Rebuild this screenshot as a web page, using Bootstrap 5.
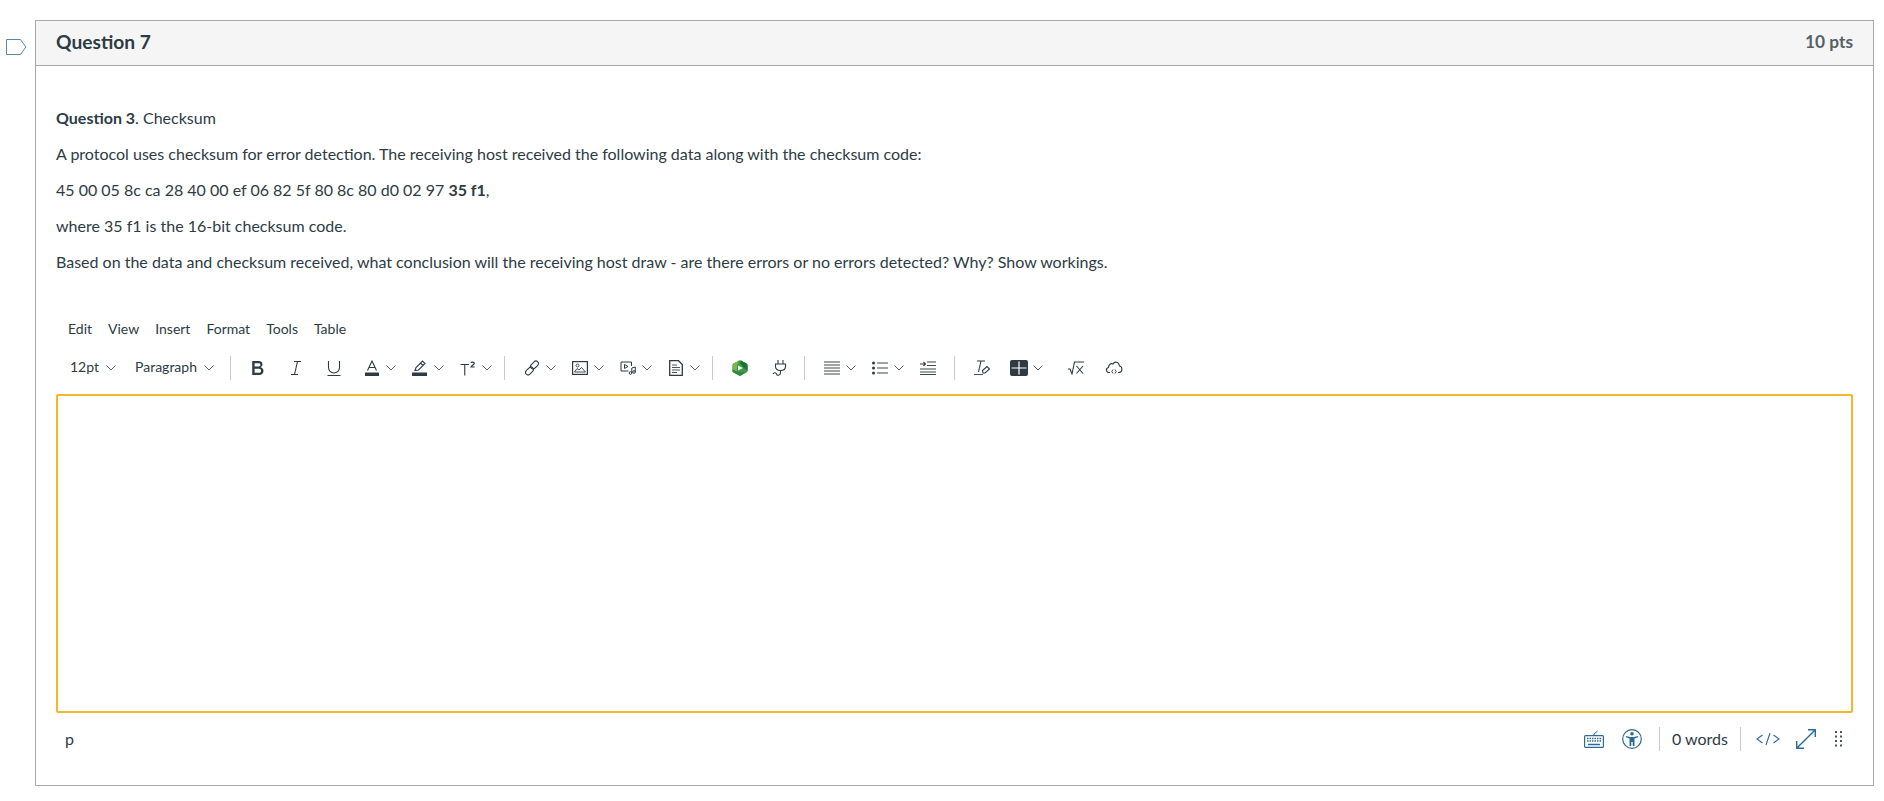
<!doctype html>
<html lang="en">
<head>
<meta charset="utf-8">
<title>Question 7</title>
<link href="https://cdn.jsdelivr.net/npm/bootstrap@5.3.0/dist/css/bootstrap.min.css" rel="stylesheet">
<style>
html,body{height:100%;background:#fff}
body{font-family:Lato,"Liberation Sans",sans-serif;color:#2d3b45;font-size:16px;overflow:hidden}
.page-wrap{padding:20px 10px 0 0}
.flag-col{width:35px;flex:none;padding:14px 0 0 6px}
.q-card{flex:1;height:766px;border:1px solid #a9a9a9;border-radius:0;--bs-card-inner-border-radius:0}
.q-head{height:45px;background:#f5f5f5;border-bottom:1px solid #a9a9a9;border-radius:0;padding:0 20px 2px;color:#2d3b45}
.q-title{font-size:19.2px;font-weight:700}
.q-pts{font-size:17.3px;font-weight:700;color:#565f66}
.q-body{padding:0 20px}
.q-text{padding-top:40px;height:246px}
.q-text p{line-height:24px;margin:0 0 12px;font-size:16px}
.menu-row{height:24px;margin-top:5px;padding-left:12px;gap:16px;font-size:14px;color:#2d3b45;line-height:24px}
.tool-row{height:40px;margin-top:7px;font-size:14px;color:#2d3b45}
.tool-row svg{display:block}
.drop{display:flex;align-items:center;justify-content:center;width:10px;flex:none}
.txt-tool{padding-left:14px;padding-bottom:3px;display:flex;align-items:center}
.vsep{width:1px;height:24px;background:#c7cdd1;flex:none}
.ic38{width:38px;flex:none;display:flex;justify-content:center}
.ic40{width:40px;flex:none;display:flex;justify-content:center}
.ic28{width:28px;flex:none;display:flex;justify-content:center}
.splt{width:48px;flex:none;display:flex;align-items:center}
.splt-ic{width:28px;flex:none;display:flex;justify-content:center}
.o2{margin-left:2px}.o4{margin-left:4px}.o5{margin-left:5px}.o7{margin-left:7px}.o8{margin-left:8px}.o9{margin-left:9px}.o12{margin-left:12px}.o13{margin-left:13px}.o16{margin-left:16px}
.para-tool{padding-left:19px}
.edit-box{height:319px;border:2px solid #f2b82c;border-radius:2px;margin-top:6px;background:#fff}
.status-row{height:52px;font-size:16px;padding:0 0 0 9px}
.stat-p{font-size:16px;color:#2d3b45}
.stat-sep{width:1px;height:24px;background:#c7cdd1;flex:none}
</style>
</head>
<body>
<div class="page-wrap d-flex">
  <div class="flag-col">
    <svg width="21" height="17" viewBox="0 0 21 17"><path d="M.5.5H14.500L19.800 8 14.500 15.500H.5Z" fill="none" stroke="#5a87a5" stroke-width="1"/></svg>
  </div>
  <div class="card q-card">
    <div class="card-header q-head d-flex align-items-center justify-content-between">
      <div class="q-title">Question 7</div>
      <div class="q-pts">10 pts</div>
    </div>
    <div class="card-body q-body">
      <div class="q-text">
        <p><strong>Question 3</strong>. Checksum</p>
        <p>A protocol uses checksum for error detection. The receiving host received the following data along with the checksum code:</p>
        <p>45 00 05 8c ca 28 40 00 ef 06 82 5f 80 8c 80 d0 02 97 <strong>35 f1</strong>,</p>
        <p>where 35 f1 is the 16-bit checksum code.</p>
        <p>Based on the data and checksum received, what conclusion will the receiving host draw - are there errors or no errors detected? Why? Show workings.</p>
      </div>
      <div class="menu-row d-flex">
        <span>Edit</span><span>View</span><span>Insert</span><span>Format</span><span>Tools</span><span>Table</span>
      </div>
      <div class="tool-row d-flex align-items-center">
        <div class="txt-tool"><span>12pt</span></div>
        <div class="drop o7"><svg width="10" height="6" viewBox="0 0 10 6"><path d="M.5.5 5 5 9.500.5" fill="none" stroke="#2d3b45" stroke-width=".8"/></svg></div>
        <div class="txt-tool para-tool"><span>Paragraph</span></div>
        <div class="drop o7"><svg width="10" height="6" viewBox="0 0 10 6"><path d="M.5.5 5 5 9.500.5" fill="none" stroke="#2d3b45" stroke-width=".8"/></svg></div>
        <div class="vsep o16"></div>

        <div class="ic38 o8"><svg width="16" height="16" viewBox="0 0 16 16"><path d="M2.200 1H9c2.200 0 3.500 1.400 3.500 3.300 0 1.400-.8 2.500-2 2.900 1.700.3 3 1.600 3 3.500 0 2.500-1.700 4.300-4.200 4.300H2.200ZM4.600 3.200V6.500H8.700c1.100 0 1.700-.7 1.700-1.650s-.6-1.650-1.700-1.650ZM4.600 8.700V12.800H9c1.300 0 2.100-.8 2.100-2.050S10.300 8.700 9 8.700Z" fill="#2d3b45" fill-rule="evenodd"/></svg></div>
        <div class="ic38"><svg width="12" height="16" viewBox="0 0 12 16"><path d="M4 1.500H11M1 14.500H8M7.500 1.500 4.500 14.500" fill="none" stroke="#2d3b45" stroke-width="1.100"/></svg></div>
        <div class="ic38"><svg width="14" height="16" viewBox="0 0 14 16"><path d="M1.500 1V7.500a5.500 5.500 0 0 0 11 0V1M.5 15.500H13.500" fill="none" stroke="#2d3b45" stroke-width="1.100"/></svg></div>

        <div class="splt o5"><div class="splt-ic"><svg width="14" height="16" viewBox="0 0 14 16"><path d="M2.500 10.500 7 1 11.500 10.500M4 7.500H10" fill="none" stroke="#2d3b45" stroke-width="1.100"/><rect y="12.500" width="14" height="3.500" fill="#2d3b45"/></svg></div><div class="drop"><svg width="10" height="6" viewBox="0 0 10 6"><path d="M.5.5 5 5 9.500.5" fill="none" stroke="#2d3b45" stroke-width=".8"/></svg></div></div>
        <div class="splt"><div class="splt-ic"><svg width="15" height="16" viewBox="0 0 15 16"><path d="M3 10.500 4 7.500 10.500 1 13 3.500 6.500 10 3 10.500ZM8.500 3 11 5.500" fill="none" stroke="#2d3b45" stroke-width="1.100"/><rect y="12.500" width="15" height="3.500" fill="#2d3b45"/></svg></div><div class="drop"><svg width="10" height="6" viewBox="0 0 10 6"><path d="M.5.5 5 5 9.500.5" fill="none" stroke="#2d3b45" stroke-width=".8"/></svg></div></div>
        <div class="splt"><div class="splt-ic"><svg width="16" height="16" viewBox="0 0 16 16"><path d="M.5 4.500H9M4.750 4.500V15.500" fill="none" stroke="#2d3b45" stroke-width="1.100"/><path d="M11 3c.2-1.200 3.300-1.400 3.300.3 0 1.300-2.500 1.800-3.300 3.700h3.600" fill="none" stroke="#2d3b45" stroke-width="1.200"/></svg></div><div class="drop"><svg width="10" height="6" viewBox="0 0 10 6"><path d="M.5.5 5 5 9.500.5" fill="none" stroke="#2d3b45" stroke-width=".8"/></svg></div></div>

        <div class="vsep o2"></div>

        <div class="splt o13"><div class="splt-ic"><svg width="16" height="16" viewBox="0 0 16 16"><g fill="none" stroke="#2d3b45" stroke-width="1.100"><rect x="1" y="8.500" width="9" height="5" rx="2.500" transform="rotate(-45 5.500 11)"/><rect x="6" y="2.500" width="9" height="5" rx="2.500" transform="rotate(-45 10.500 5)"/></g></svg></div><div class="drop"><svg width="10" height="6" viewBox="0 0 10 6"><path d="M.5.5 5 5 9.500.5" fill="none" stroke="#2d3b45" stroke-width=".8"/></svg></div></div>
        <div class="splt"><div class="splt-ic"><svg width="16" height="14" viewBox="0 0 16 14"><g fill="none" stroke="#2d3b45"><rect x=".6" y=".6" width="14.800" height="12.800" stroke-width="1.200"/><circle cx="5.500" cy="4.500" r="1.500" stroke-width=".9"/><path d="M2.500 11 5 7.500 7 9 9.500 6.500 13.500 11Z" stroke-width=".9"/></g></svg></div><div class="drop"><svg width="10" height="6" viewBox="0 0 10 6"><path d="M.5.5 5 5 9.500.5" fill="none" stroke="#2d3b45" stroke-width=".8"/></svg></div></div>
        <div class="splt"><div class="splt-ic"><svg width="16" height="14" viewBox="0 0 16 14"><g fill="none" stroke="#2d3b45" stroke-width="1"><path d="M8.500 10H1V1H11.500V5"/><path d="M4.500 3.500 8 5.500 4.500 7.500Z"/><circle cx="10.500" cy="12" r="1.300"/><circle cx="14" cy="11" r="1.300"/><path d="M11.800 12V7L15.300 6V11"/></g></svg></div><div class="drop"><svg width="10" height="6" viewBox="0 0 10 6"><path d="M.5.5 5 5 9.500.5" fill="none" stroke="#2d3b45" stroke-width=".8"/></svg></div></div>
        <div class="splt"><div class="splt-ic"><svg width="14" height="16" viewBox="0 0 14 16"><path d="M.7.7H9.500L13.300 4.500V15.300H.7Z" fill="none" stroke="#2d3b45" stroke-width="1.300"/><path d="M3 5H8M3 7.500H11M3 10H11M3 12.500H8" stroke="#4a565f" stroke-width="1.200"/></svg></div><div class="drop"><svg width="10" height="6" viewBox="0 0 10 6"><path d="M.5.5 5 5 9.500.5" fill="none" stroke="#2d3b45" stroke-width=".8"/></svg></div></div>

        <div class="vsep o2"></div>

        <div class="ic40 o7"><svg width="16" height="16" viewBox="0 0 16 16"><path d="M7 .5Q8 0 9 .5L14.500 3.500Q15.500 4 15.500 5V11Q15.500 12 14.500 12.500L9 15.500Q8 16 7 15.500L1.500 12.500Q.5 12 .5 11V5Q.5 4 1.500 3.500Z" fill="#3f9a4a"/><path d="M9 .5 14.500 3.500Q15.500 4 15.500 5V11L12 8 8 3.500Z" fill="#1d7235"/><path d="M.5 9 6 12H13L9 15.500Q8 16 7 15.500L1.500 12.500Q.5 12 .5 11Z" fill="#2f8a3f"/><path d="M.5 5Q.5 4 1.500 3.500L7 .5 5 6 4.500 11.500.5 9Z" fill="#7ab648"/><path d="M6 5.500 10.800 8 6 10.500Z" fill="#fff"/></svg></div>
        <div class="ic40"><svg width="16" height="18" viewBox="0 0 16 18"><g fill="none" stroke="#2d3b45" stroke-width="1.100"><path d="M6 1V5M11 1V5M3.500 5H13.500V7.500C13.500 10.200 11.500 11.500 8.500 11.500 5.500 11.500 3.500 10.200 3.500 7.500Z"/><path d="M8.500 11.500V14C8.500 16.500 5 17 4.500 15 4 13.500 2 13 1 15"/></g></svg></div>

        <div class="vsep o4"></div>

        <div class="splt o13"><div class="splt-ic"><svg width="16" height="14" viewBox="0 0 16 14"><path d="M0 1H16M0 4H16M0 7H16M0 10H16M0 13H16" stroke="#3c4852" stroke-width="1.100"/></svg></div><div class="drop"><svg width="10" height="6" viewBox="0 0 10 6"><path d="M.5.5 5 5 9.500.5" fill="none" stroke="#2d3b45" stroke-width=".8"/></svg></div></div>
        <div class="splt"><div class="splt-ic"><svg width="16" height="14" viewBox="0 0 16 14"><circle cx="1.500" cy="2" r="1.500" fill="#2d3b45"/><circle cx="1.500" cy="7" r="1.500" fill="#2d3b45"/><circle cx="1.500" cy="12" r="1.500" fill="#2d3b45"/><path d="M5 2H16M5 7H16M5 12H16" stroke="#3c4852" stroke-width="1.100"/></svg></div><div class="drop"><svg width="10" height="6" viewBox="0 0 10 6"><path d="M.5.5 5 5 9.500.5" fill="none" stroke="#2d3b45" stroke-width=".8"/></svg></div></div>
        <div class="ic28"><svg width="16" height="14" viewBox="0 0 16 14"><path d="M0 3H5M3.500 1 5.500 3 3.500 5" fill="none" stroke="#2d3b45" stroke-width="1.100"/><path d="M7 1H16M7 4.500H16M0 8H16M0 11H16M0 13.500H16" stroke="#3c4852" stroke-width="1.200"/></svg></div>

        <div class="vsep o12"></div>

        <div class="ic28 o13"><svg width="16" height="16" viewBox="0 0 16 16"><g fill="none" stroke="#2d3b45" stroke-width="1.100"><path d="M3 1H11M7 1 4.500 12"/><path d="M0 14.500H9" stroke="#4a565f"/><path d="M9 13 8.500 10.500 13 6.500 15.500 9 11 13Z"/></g></svg></div>
        <div class="splt o9"><div class="splt-ic"><svg width="18" height="16" viewBox="0 0 18 16"><rect width="18" height="16" rx="2" fill="#2d3b45"/><path d="M1.500 7.400H16.500V8.600H1.500ZM8.400 1.500H9.600V14.500H8.400Z" fill="#fff"/></svg></div><div class="drop"><svg width="10" height="6" viewBox="0 0 10 6"><path d="M.5.5 5 5 9.500.5" fill="none" stroke="#2d3b45" stroke-width=".8"/></svg></div></div>
        <div class="ic38 o4"><svg width="16" height="14" viewBox="0 0 16 14"><path d="M0 8 2 8 4 13 6.500 1H16M8.500 5 15 12.500M15 5 8.500 12.500" fill="none" stroke="#2d3b45" stroke-width="1.100"/></svg></div>
        <div class="ic38"><svg width="18" height="16" viewBox="0 0 18 16"><path d="M5 12.500H4C1 12.500 .5 8 3.500 7.500 3.500 4.500 6 3 8 4 9.500 1 14 1.500 14.500 6 17.500 6.500 18 12 14 12.500H13" fill="none" stroke="#2d3b45" stroke-width="1.100"/><path d="M8 9.500 6.800 11.500 8 13.500M10 9.500 11.200 11.500 10 13.500" fill="none" stroke="#2d3b45" stroke-width=".9"/></svg></div>
      </div>
      <div class="edit-box"></div>
      <div class="status-row d-flex align-items-center justify-content-between">
        <div class="stat-p">p</div>
        <div class="d-flex align-items-center">
          <div class="ic38"><svg width="20" height="18" viewBox="0 0 20 18"><g fill="none" stroke="#2d6a96"><rect x=".6" y="5.600" width="18.800" height="11.800" rx="1" stroke-width="1.200"/><path d="M10 5.500V4L13.500 1"/></g><path d="M3 8.500H17M3 11H17" stroke="#2d6a96" stroke-width="1.500" stroke-dasharray="1.500 1"/><path d="M4 14.500H16" stroke="#2d6a96" stroke-width="1.500"/></svg></div>
          <div class="ic38"><svg width="20" height="20" viewBox="0 0 20 20"><circle cx="10" cy="10" r="9.300" fill="none" stroke="#2d6a96" stroke-width="1.200"/><circle cx="10" cy="4.800" r="1.800" fill="#2d6a96"/><path d="M4 7 8 8H12L16 7V8.200L12.500 9.500V17H10.700V13H9.300V17H7.500V9.500L4 8.200Z" fill="#2d6a96"/></svg></div>
          <div class="stat-sep o8"></div>
          <div class="mx-2 px-1 text-nowrap">0 words</div>
          <div class="stat-sep"></div>
          <div class="ic38 ms-2"><svg width="24" height="14" viewBox="0 0 24 14"><path d="M6.500 3 1 7 6.500 11M17.500 3 23 7 17.500 11M14 1 10 13" fill="none" stroke="#2d6a96" stroke-width="1.100"/></svg></div>
          <div class="ic38"><svg width="20" height="20" viewBox="0 0 20 20"><path d="M.7 19.300 19.300.7M12 .7H19.300V8M8 19.300H.7V12" fill="none" stroke="#2d6a96" stroke-width="1.400"/></svg></div>
          <div class="ic28"><svg width="8" height="16" viewBox="0 0 8 16"><g fill="#4a565f"><rect width="2" height="2"/><rect x="5" width="2" height="2"/><rect y="4.500" width="2" height="2"/><rect x="5" y="4.500" width="2" height="2"/><rect y="9" width="2" height="2"/><rect x="5" y="9" width="2" height="2"/><rect y="13.500" width="2" height="2"/><rect x="5" y="13.500" width="2" height="2"/></g></svg></div>
        </div>
      </div>
    </div>
  </div>
</div>
<script src="https://cdn.jsdelivr.net/npm/bootstrap@5.3.0/dist/js/bootstrap.bundle.min.js"></script>
</body>
</html>
